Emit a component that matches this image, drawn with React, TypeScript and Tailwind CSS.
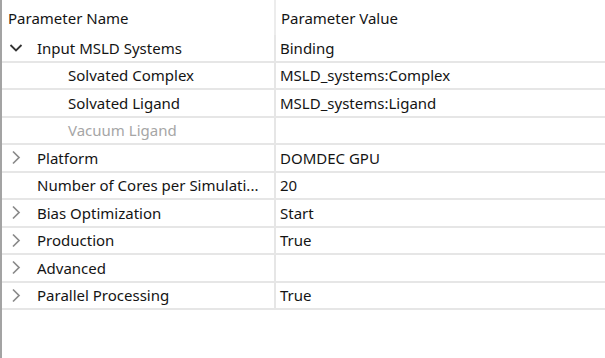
import React from "react";

type Row = { name: string; value: string; level: 0 | 1; arrow?: "down" | "right"; disabled?: boolean };

const rows: Row[] = [
  { name: "Input MSLD Systems", value: "Binding", level: 0, arrow: "down" },
  { name: "Solvated Complex", value: "MSLD_systems:Complex", level: 1 },
  { name: "Solvated Ligand", value: "MSLD_systems:Ligand", level: 1 },
  { name: "Vacuum Ligand", value: "", level: 1, disabled: true },
  { name: "Platform", value: "DOMDEC GPU", level: 0, arrow: "right" },
  { name: "Number of Cores per Simulati...", value: "20", level: 0 },
  { name: "Bias Optimization", value: "Start", level: 0, arrow: "right" },
  { name: "Production", value: "True", level: 0, arrow: "right" },
  { name: "Advanced", value: "", level: 0, arrow: "right" },
  { name: "Parallel Processing", value: "True", level: 0, arrow: "right" },
];

function Chevron({ dir }: { dir: "down" | "right" }) {
  if (dir === "down") {
    return (
      <svg width="14" height="10" viewBox="0 0 14 10" className="block">
        <path d="M1.5 2 L7 7.5 L12.5 2" fill="none" stroke="#333" strokeWidth="1.8" />
      </svg>
    );
  }
  return (
    <svg width="10" height="15" viewBox="0 0 10 15" className="block">
      <path d="M2 1.5 L8 7.5 L2 13.5" fill="none" stroke="#8a8a8a" strokeWidth="1.7" />
    </svg>
  );
}

export default function App() {
  return (
    <div
      className="w-[605px] h-[358px] bg-white border-l-2 border-[#a3a3a3] text-[15px] text-[#141414] overflow-hidden"
      style={{ fontFamily: '"Noto Sans", "Noto Sans CJK SC", sans-serif' }}
    >
      <div className="grid grid-cols-[274px_1fr] h-[35px]">
        <div className="flex items-center pl-[6px] pt-[1px] border-r-2 border-[#ececec]">Parameter Name</div>
        <div className="flex items-center pl-[5px] pt-[1px]">Parameter Value</div>
      </div>
      {rows.map((r, i) => (
        <div key={i} className="grid grid-cols-[274px_1fr] h-[27.5px] border-b-2 border-[#e6e6e6]">
          <div className="flex items-center border-r-2 border-[#e6e6e6] min-w-0">
            <div className="w-[35px] flex justify-center items-center shrink-0 pr-[8px]">
              {r.arrow ? <Chevron dir={r.arrow} /> : null}
            </div>
            <span
              className={`whitespace-nowrap ${r.level === 1 ? "pl-[31px]" : ""} ${r.disabled ? "text-[#a6a6a6]" : ""}`}
            >
              {r.name}
            </span>
          </div>
          <div className="flex items-center pl-[4px] whitespace-nowrap">{r.value}</div>
        </div>
      ))}
    </div>
  );
}
